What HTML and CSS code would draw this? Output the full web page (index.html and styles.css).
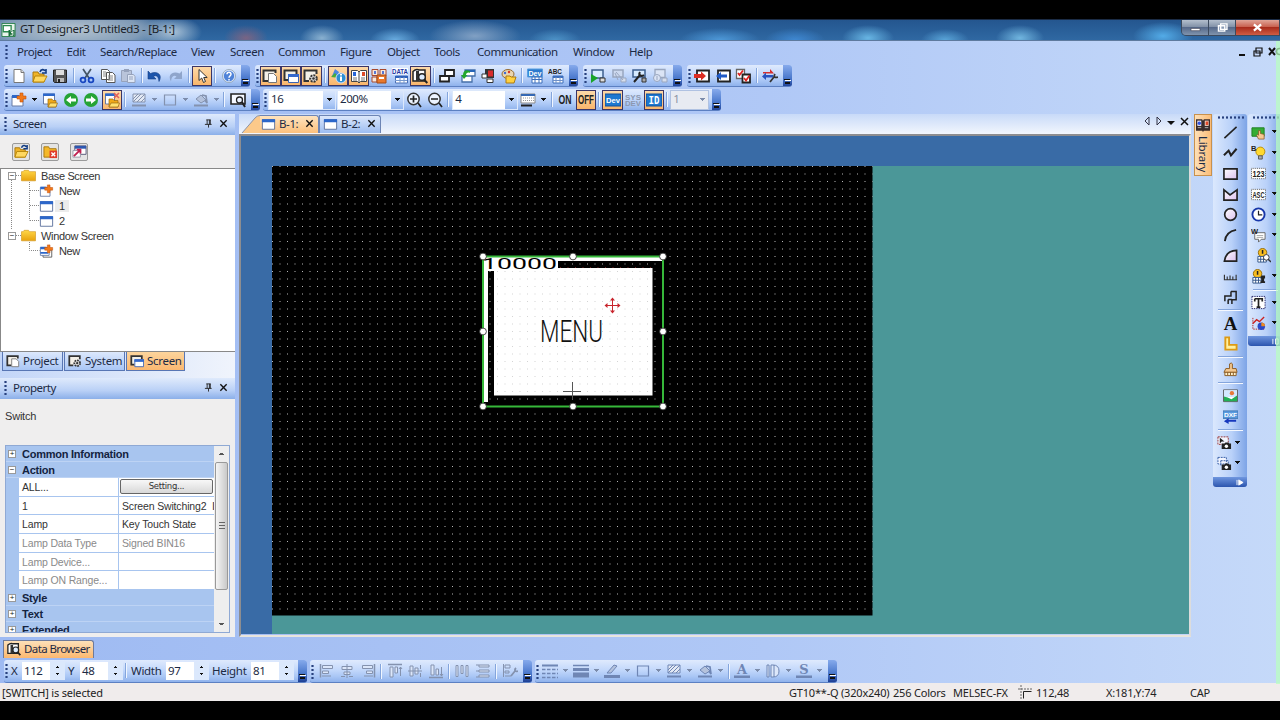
FILE: index.html
```html
<!DOCTYPE html>
<html lang="en">
<head>
<meta charset="utf-8">
<title>GT Designer3 Untitled3 - [B-1:]</title>
<link rel="stylesheet" href="styles.css">
</head>
<body>
<svg class="defs" width="0" height="0">
<defs>
<linearGradient id="gFold" x1="0" y1="0" x2="0" y2="1"><stop offset="0" stop-color="#ffd84a"/><stop offset="1" stop-color="#e8a20c"/></linearGradient>
<linearGradient id="gLil" x1="0" y1="0" x2="1" y2="1"><stop offset="0" stop-color="#fff"/><stop offset="1" stop-color="#dcc0ee"/></linearGradient>
<pattern id="dots" width="15" height="15" patternUnits="userSpaceOnUse"><path d="M0 0h1v1h-1zM7.5 0h1v1h-1zM0 7.5h1v1h-1zM7.5 7.5h1v1h-1z" fill="#b8b8b8"/></pattern>
<pattern id="dotsL" width="15" height="15" patternUnits="userSpaceOnUse"><path d="M0 0h1v1h-1zM7.5 0h1v1h-1zM0 7.5h1v1h-1zM7.5 7.5h1v1h-1z" fill="#d4d4d4"/></pattern>
</defs>
<symbol id="new" viewBox="0 0 16 16"><path d="M3 1.500h7l3 3v10H3z" fill="#fff" stroke="#777"/><path d="M10 1.500v3h3" fill="#ddd" stroke="#777"/></symbol>
<symbol id="open" viewBox="0 0 16 16"><path d="M1 4h5l1 2h5v8H1z" fill="#f0b428" stroke="#a87810"/><path d="M3 8h12l-3 6H1z" fill="#ffd860" stroke="#b8860b"/><path d="M8 4c1-3 4-3 5-1m1-2v4h-4" fill="none" stroke="#123c84" stroke-width="1.600"/></symbol>
<symbol id="save" viewBox="0 0 16 16"><path d="M1.500 2h13v12.500h-12l-1-1z" fill="#555" stroke="#222"/><path d="M4 2h8v5H4z" fill="#ddd"/><path d="M5 10h7v4H5z" fill="#bbb"/><path d="M6 11h2v3H6z" fill="#222"/></symbol>
<symbol id="cut" viewBox="0 0 16 16"><path d="M4 1l6 9M12 1L6 10" stroke="#456" stroke-width="1.700"/><circle cx="4" cy="12" r="2.400" fill="none" stroke="#1746c0" stroke-width="1.800"/><circle cx="12" cy="12" r="2.400" fill="none" stroke="#1746c0" stroke-width="1.800"/></symbol>
<symbol id="copy" viewBox="0 0 16 16"><path d="M1.500 1.500h6l2 2v8h-8zM6.500 4.500h6l2.500 2.500v7.500H6.500z" fill="#fff" stroke="#555"/><path d="M3 4h3M3 6h3M3 8h3M8 8h5M8 10h5M8 12h5" stroke="#888"/></symbol>
<symbol id="paste" viewBox="0 0 16 16"><path d="M1.500 2.500h10v11h-10z" fill="#b9c4da" stroke="#96a2bb"/><path d="M4 1h5v3H4z" fill="#96a2bb"/><path d="M7.500 6.500h6l1.500 2v6H7.500z" fill="#dde6f5" stroke="#96a2bb"/><path d="M9 9h4M9 11h4" stroke="#96a2bb"/></symbol>
<symbol id="undo" viewBox="0 0 16 16"><path d="M1 3v8h8L6.500 8.500c3-2 5 0 5.500 5 4-7-2-11-8.500-8z" fill="#1c55ac" stroke="#143f86" stroke-width=".6"/></symbol>
<symbol id="redo" viewBox="0 0 16 16"><path d="M15 3v8H7l2.500-2.500c-3-2-5 0-5.500 5-4-7 2-11 8.500-8z" fill="#8fa5cb"/></symbol>
<symbol id="arrow" viewBox="0 0 16 16"><path d="M5 1.500v11l2.700-2.500 1.800 4.500 2-1-1.800-4h3.500z" fill="#fff" stroke="#333"/></symbol>
<symbol id="help" viewBox="0 0 16 16"><circle cx="8" cy="8" r="6.500" fill="#dce9ff" stroke="#9ab"/><circle cx="8" cy="8" r="5.200" fill="#4e82d8"/><path d="M6 6.300c0-2.600 4.200-2.600 4 0C10 8 8 7.600 8 9.700M8 11v1.500" fill="none" stroke="#fff" stroke-width="1.500"/></symbol>
<symbol id="winL" viewBox="0 0 16 16"><path d="M6 13H1.500V2.500h12V5" fill="#f4f0e8" stroke="#333" stroke-width="2"/><path d="M6.500 5.500h5l3 3v6h-8z" fill="#fff" stroke="#777"/></symbol>
<symbol id="winB" viewBox="0 0 16 16"><path d="M5 12H1.500V2.500h12V6" fill="#f4f0e8" stroke="#333" stroke-width="2"/><path d="M5.500 6.500h10v8h-10z" fill="#fff" stroke="#3b64b5"/><path d="M5 6h11v3H5z" fill="#3468cc"/></symbol>
<symbol id="winG" viewBox="0 0 16 16"><path d="M6 13H1.500V2.500h12V6" fill="#f4f0e8" stroke="#333" stroke-width="2"/><circle cx="10.500" cy="10.500" r="3.300" fill="#ddd" stroke="#333" stroke-width="2" stroke-dasharray="2 1"/><circle cx="10.500" cy="10.500" r="1.300" fill="#333"/></symbol>
<symbol id="shapes" viewBox="0 0 16 16"><path d="M5 1l4 3-2 5-5-1z" fill="#4b86e0"/><path d="M1 9l4-4 4 5z" fill="#49ac35"/><circle cx="11" cy="10" r="5" fill="#2b8fd4" stroke="#cdf"/><path d="M11 6v1.500M11 8.500v4.500" stroke="#fff" stroke-width="2"/></symbol>
<symbol id="book" viewBox="0 0 16 16"><path d="M.5 2.500h6L8 4l1.500-1.500h6v11h-6L8 15l-1.500-1.500h-6z" fill="#fff" stroke="#444"/><path d="M8 4v10" stroke="#444"/><path d="M2 4h3v4H2z" fill="#2865d8"/><path d="M11 4h3v4h-3z" fill="#dd4a28"/><path d="M2 10h4M2 12h4M10 10h4M10 12h4" stroke="#777"/></symbol>
<symbol id="bookD" viewBox="0 0 16 16"><path d="M0 1.500h7L8 3l1-1.500h7v13H9L8 16l-1-1.500H0z" fill="#3a2c2c"/><path d="M1.500 3H6v6H1.500z" fill="#f3f0ff"/><path d="M10 3h4.500v6H10z" fill="#f8d8c8"/><circle cx="3.800" cy="6" r="2" fill="#3355e0"/><path d="M11 4h3v4h-3z" fill="#e04a2c"/><path d="M2 11h4M10 11h4" stroke="#bbb"/></symbol>
<symbol id="lib" viewBox="0 0 16 16"><path d="M1 1.500h6v6H1zM9 1.500h6v6H9zM1 9h5v5H1z" fill="#f8e7dc" stroke="#a7482c"/><path d="M3 3h2v3H3zM11 3h2v3h-2z" fill="#5577d4"/><path d="M6 7h9v8H6z" fill="#e9782c" stroke="#a44b16"/><path d="M8 9h5v2H8z" fill="#fff"/></symbol>
<symbol id="data" viewBox="0 0 16 16"><path d="M0 0h16v6.500H0z" fill="#fff"/><path d="M3.500 8h12v7h-12z" fill="#fff" stroke="#4d71b6"/><path d="M3 8h13v2H3z" fill="#2f62bb"/><path d="M3 12.500h12M8 9v6M12 9v6" stroke="#7799cf"/></symbol>
<symbol id="browse" viewBox="0 0 16 16"><path d="M1 3.500q3-3 6-1.500h6v11H1z" fill="#fff" stroke="#222" stroke-width="1.500"/><path d="M4 3h3v10H4z" fill="#333"/><circle cx="10" cy="9" r="3.300" fill="#dcecff" stroke="#222" stroke-width="1.400"/><path d="M12 11.500l3.300 3.500" stroke="#222" stroke-width="2"/></symbol>
<symbol id="two" viewBox="0 0 16 16"><path d="M6 2h9v6H6z" fill="#fff" stroke="#222" stroke-width="1.800"/><path d="M1 8h9v5.500H1z" fill="#fff" stroke="#222" stroke-width="1.800"/></symbol>
<symbol id="twoG" viewBox="0 0 16 16"><path d="M5 2h10v6H5zM2 8h10v6H2z" fill="#fff" stroke="#446fa9" stroke-width="1.300"/><path d="M5 2h10v2H5z" fill="#2765b7"/><path d="M10 3c-4-2-7 0-7 4H1l3 4 3.500-4H6c0-2 2-3 4-2z" fill="#22a72d"/></symbol>
<symbol id="stack" viewBox="0 0 16 16"><path d="M5 1h9v9H5z" fill="#333"/><path d="M8 2.500h5v6H8z" fill="#d82c2c"/><path d="M2 6h5v4H2zM7 11h6v3.500H7z" fill="#fff" stroke="#333"/></symbol>
<symbol id="palette" viewBox="0 0 16 16"><ellipse cx="7" cy="6" rx="6" ry="4.500" fill="#e9d5b0" stroke="#956b32"/><circle cx="4" cy="5" r="1.200" fill="#3c6bd6"/><circle cx="8" cy="4" r="1.200" fill="#d83b28"/><path d="M5 8h4l1 1h5l-2 6H5z" fill="#ffd040" stroke="#ad7c12"/></symbol>
<symbol id="devT" viewBox="0 0 16 16"><path d="M.5 1h15v8H.5z" fill="#2b79cd" stroke="#5ba0df"/><path d="M5 9h10v6H5z" fill="#fff" stroke="#3c6ebc"/><path d="M5 11.500h10M8 9v6M12 9v6" stroke="#3c6ebc"/></symbol>
<symbol id="abcT" viewBox="0 0 16 16"><path d="M5 8h10v7H5z" fill="#fff" stroke="#3c6ebc"/><path d="M5 8h10v2H5z" fill="#3c6ebc"/><path d="M5 12.500h10M8 9v6M12 9v6" stroke="#6d90c9"/></symbol>
<symbol id="simPlay" viewBox="0 0 16 16"><path d="M2 2h11v8H2z" fill="#d6eaff" stroke="#3c5f8f" stroke-width="1.500"/><path d="M1 6l7 4-7 5z" fill="#18a428"/><path d="M10 10h5v4h-5z" fill="#ddd" stroke="#333"/></symbol>
<symbol id="simStop" viewBox="0 0 16 16"><path d="M2 2h10v7H2z" fill="#cdd9ef" stroke="#99a6bf" stroke-width="1.500"/><path d="M5 4l7 8m-8-7 3 7M10 10h5v4h-5z" fill="#d6deed" stroke="#99a6bf"/></symbol>
<symbol id="simInfo" viewBox="0 0 16 16"><path d="M3 1.500h10v8H3z" fill="#dbe4f5" stroke="#99a6bf" stroke-width="1.300"/><circle cx="5" cy="10" r="3.500" fill="#dbe4f5" stroke="#99a6bf"/><path d="M5 8v4M10 10h5v4h-5z" fill="#d6deed" stroke="#99a6bf"/></symbol>
<symbol id="simTool" viewBox="0 0 16 16"><path d="M2 2h12v7H2z" fill="#d6eaff" stroke="#3c5f8f" stroke-width="1.500"/><path d="M3 14l6-7m0-3c-2 3 1 5 4 3" fill="none" stroke="#222" stroke-width="2"/><path d="M11 10h4v4h-4z" fill="#aaa" stroke="#333"/></symbol>
<symbol id="inR" viewBox="0 0 16 16"><path d="M3 2.500h12v11H3z" fill="#fff" stroke="#222" stroke-width="1.800"/><path d="M0 6h7V3.500L12 8l-5 4.500V10H0z" fill="#dd2d22"/></symbol>
<symbol id="outB" viewBox="0 0 16 16"><path d="M3 2.500h12v11H3z" fill="#fff" stroke="#222" stroke-width="1.800"/><path d="M12 6.500H6V4L1 8l5 4V9.500h6z" fill="#205bc7"/></symbol>
<symbol id="verify" viewBox="0 0 16 16"><path d="M1.500 1.500h8v9h-8z" fill="#fff" stroke="#666" stroke-width="1.300"/><path d="M7.500 6.500h7.500v8H7.500z" fill="#fff" stroke="#222" stroke-width="1.800"/><path d="M3 5l1.500 2L8 2.500M9 10l2 2.500 3.500-5" fill="none" stroke="#d22" stroke-width="1.800"/></symbol>
<symbol id="comm" viewBox="0 0 16 16"><path d="M1 4h7V1l4 4.500H1z" fill="#d62e2e"/><path d="M11 7H4V4.500L0 8.500 4 12V9.500h7z" fill="#2853bf"/><path d="M8 14l4-5m1-3c-2 3 0 4 3 3" fill="none" stroke="#333" stroke-width="1.800"/></symbol>
<symbol id="scrNew" viewBox="0 0 16 16"><path d="M1 4h11v10H1z" fill="#fff" stroke="#667aa5"/><path d="M1 3h7v3H1z" fill="#2c67ca"/><path d="M9 1h3v3h3v3h-3v3H9V7H6V4h3z" fill="#f27a1a" stroke="#c4510c" stroke-width=".6"/></symbol>
<symbol id="scrNew2" viewBox="0 0 16 16"><path d="M4 7h10v8H4z" fill="#fff" stroke="#555"/><path d="M1 4h10v9H1z" fill="#fff" stroke="#667aa5"/><path d="M1 3h7v3H1zM1 9h9v2H1z" fill="#2c67ca"/><path d="M9 1h3v3h3v3h-3v3H9V7H6V4h3z" fill="#f27a1a" stroke="#c4510c" stroke-width=".6"/></symbol>
<symbol id="scr" viewBox="0 0 16 16"><path d="M1 3h14v11H1z" fill="#fff" stroke="#556a98"/><path d="M.5 2.500h15v3.500H.5z" fill="#2c67ca"/></symbol>
<symbol id="scrOpen" viewBox="0 0 16 16"><path d="M1.500 2h11v10h-11z" fill="#fff" stroke="#667aa5"/><path d="M1 1.500h12v2.500H1z" fill="#2c67ca"/><path d="M6 7h4l1 1.500h3V15H6z" fill="#f0a818" stroke="#9a6b12" stroke-width=".7"/><path d="M8 11h7.500L14 15H6z" fill="#ffe070" stroke="#9a6b12" stroke-width=".7"/></symbol>
<symbol id="scrOpenR" viewBox="0 0 16 16"><path d="M1.500 2h9v10h-9z" fill="#fff" stroke="#667aa5"/><path d="M1 1.500h9v2.500H1z" fill="#2c67ca"/><path d="M10 1l5 5M15 1l-5 5" stroke="#e0605c" stroke-width="1.600"/><path d="M5 7h4l1 1.500h4V15H5z" fill="#f0a818" stroke="#9a6b12" stroke-width=".7"/><path d="M7 11h8.500L14 15H5z" fill="#ffe070" stroke="#9a6b12" stroke-width=".7"/></symbol>
<symbol id="gL" viewBox="0 0 16 16"><circle cx="8" cy="8" r="7" fill="#25a335"/><path d="M13 6.500H8V4L3 8l5 4V9.500h5z" fill="#fff"/></symbol>
<symbol id="gR" viewBox="0 0 16 16"><circle cx="8" cy="8" r="7" fill="#25a335"/><path d="M3 6.500h5V4l5 4-5 4V9.500H3z" fill="#fff"/></symbol>
<symbol id="hatch" viewBox="0 0 16 16"><path d="M2 2h12v8H2z" fill="#e3e9f4" stroke="currentColor"/><path d="M2 7l5-5M2 10l8-8M6 10l8-8M10 10l4-4" stroke="currentColor"/><path d="M1 12.500h14v2H1z" fill="currentColor"/></symbol>
<symbol id="rectG" viewBox="0 0 16 16"><path d="M2.500 3h11v10h-11z" fill="none" stroke="currentColor" stroke-width="1.200"/></symbol>
<symbol id="bucket" viewBox="0 0 16 16"><path d="M3 7l5-4 5 5-5 3z" fill="#b4c2dc" stroke="currentColor"/><path d="M9 3l4 1 1 7-2-3" fill="none" stroke="currentColor" stroke-width="1.700"/><path d="M1 12.500h14v2H1z" fill="currentColor"/></symbol>
<symbol id="look" viewBox="0 0 16 16"><path d="M1 2h14v10H1z" fill="#f5f8ff" stroke="#222" stroke-width="1.600"/><circle cx="9.500" cy="8" r="3" fill="#eaf2ff" stroke="#222" stroke-width="1.300"/><path d="M12 10l3 5" stroke="#222" stroke-width="2"/></symbol>
<symbol id="zin" viewBox="0 0 16 16"><circle cx="7.500" cy="7" r="5.700" fill="#edf4ff" stroke="#333" stroke-width="1.500"/><path d="M4 7h7M7.500 3.500v7M12 11l3 4" stroke="#222" stroke-width="1.700"/></symbol>
<symbol id="zout" viewBox="0 0 16 16"><circle cx="7.500" cy="7" r="5.700" fill="#edf4ff" stroke="#333" stroke-width="1.500"/><path d="M4 7h7M12 11l3 4" stroke="#222" stroke-width="1.700"/></symbol>
<symbol id="gridI" viewBox="0 0 16 16"><path d="M1 2h14v9H1z" fill="#fff" stroke="#888"/><path d="M1 2h14v2H1z" fill="#3468b4"/><path d="M3 6h11M3 8.500h11" stroke="#999" stroke-dasharray="1 1"/><path d="M1 12.500h11v2H1z" fill="#222"/></symbol>
<symbol id="blueBox" viewBox="0 0 16 16"><path d="M0 2h16v12H0z" fill="#1e78d0" stroke="#0f4f9a"/></symbol>
<symbol id="aL" viewBox="0 0 16 16"><path d="M1.500 1v13.500" stroke="currentColor" stroke-width="1.500"/><path d="M3.500 2.500h10v3h-10zM3.500 8h6v2.500h-6z" fill="#dce7fa" stroke="currentColor"/><path d="M3 13h9" stroke="currentColor"/></symbol>
<symbol id="aC" viewBox="0 0 16 16"><path d="M3 3.500h10v3H3zM5 9h6v2.500H5z" fill="#dce7fa" stroke="currentColor"/><path d="M8 1v14M2 13.500h4M10 13.500h4" stroke="currentColor"/></symbol>
<symbol id="aR" viewBox="0 0 16 16"><path d="M14.500 1v13.500" stroke="currentColor" stroke-width="1.500"/><path d="M2.500 2.500h10v3h-10zM6.500 8h6v2.500h-6z" fill="#dce7fa" stroke="currentColor"/><path d="M4 13h9" stroke="currentColor"/></symbol>
<symbol id="aT" viewBox="0 0 16 16"><path d="M1 1.500h14" stroke="currentColor" stroke-width="1.500"/><path d="M3 4h3v10H3zM8 4h2.500v6H8z" fill="#dce7fa" stroke="currentColor"/><path d="M13.500 4v9M12 6l1.500-2L15 6" stroke="currentColor" fill="none"/></symbol>
<symbol id="aM" viewBox="0 0 16 16"><path d="M3 3h3v10H3zM8 5h3v6H8z" fill="#dce7fa" stroke="currentColor"/><path d="M1 8h14M13.500 2v4M13.500 10v4" stroke="currentColor"/></symbol>
<symbol id="aB" viewBox="0 0 16 16"><path d="M1 14.500h14" stroke="currentColor" stroke-width="1.500"/><path d="M3 2h3v10H3zM8 6h2.500v6H8z" fill="#dce7fa" stroke="currentColor"/><path d="M13.500 4v9M12 11l1.500 2 1.500-2" stroke="currentColor" fill="none"/></symbol>
<symbol id="dH" viewBox="0 0 16 16"><path d="M2 2.500h2v11H2zM7 2.500h2v8H7zM12 2.500h2v11h-2z" fill="#dce7fa" stroke="currentColor"/></symbol>
<symbol id="dV" viewBox="0 0 16 16"><path d="M4 2h10v2H4zM4 7h10v2H4zM4 12h10v2H4z" fill="#dce7fa" stroke="currentColor"/><path d="M1 2h3M1 8h3M1 14h3" stroke="currentColor"/></symbol>
<symbol id="dT" viewBox="0 0 16 16"><path d="M1.500 1v13M3 2h5v3H3zM3 8h4v2H3zM3 13h6" fill="none" stroke="currentColor"/><path d="M9 13l4-5m1-3c-2 2-1 4 2 3" stroke="currentColor" stroke-width="1.800" fill="none"/></symbol>
<symbol id="lDash" viewBox="0 0 16 16"><path d="M0 2.500h16" stroke="currentColor" stroke-width="2"/><path d="M0 6.500h16M0 10.500h16M0 14.500h16" stroke="currentColor" stroke-width="1.500" stroke-dasharray="3.500 1.500"/></symbol>
<symbol id="lW" viewBox="0 0 16 16"><path d="M0 2.500h16" stroke="currentColor" stroke-width="1.500"/><path d="M0 6.500h16" stroke="currentColor" stroke-width="3"/><path d="M0 12h16" stroke="currentColor" stroke-width="5"/></symbol>
<symbol id="pen" viewBox="0 0 16 16"><path d="M3 10l7-8 3 1-6 7z" fill="#b4c2dc" stroke="currentColor"/><path d="M0 12h16v3H0z" fill="currentColor"/></symbol>
<symbol id="uline" viewBox="0 0 16 16"><path d="M0 12.500h16v2.500H0z" fill="currentColor"/></symbol>
<symbol id="folder" viewBox="0 0 16 16"><path d="M0 3h2l1-1.500h5L9 3h7v10.500H0z" fill="url(#gFold)" stroke="#cf9418" stroke-width=".7"/></symbol>
<symbol id="pin" viewBox="0 0 10 10"><path d="M2.500 1h5M3.500 1v5M6 1v5M7 1v5M1 6h7.500M5 6v3.500" stroke="#222" fill="none"/></symbol>
<symbol id="x" viewBox="0 0 10 10"><path d="M1.500 1.500l7 7M8.500 1.500l-7 7" stroke="#111" stroke-width="1.500"/></symbol>
<symbol id="line" viewBox="0 0 16 16"><path d="M1.500 14L14.500 2" stroke="#222" stroke-width="1.700"/></symbol>
<symbol id="poly" viewBox="0 0 16 16"><path d="M1 11l5-5 2.500 5 6-7" fill="none" stroke="#222" stroke-width="2.200"/></symbol>
<symbol id="rect" viewBox="0 0 16 16"><path d="M1 3h14v11H1z" fill="url(#gLil)" stroke="#222" stroke-width="1.800"/></symbol>
<symbol id="pgon" viewBox="0 0 16 16"><path d="M1 3l6.500 5.500L15 3v11H1z" fill="url(#gLil)" stroke="#222" stroke-width="1.800"/></symbol>
<symbol id="circ" viewBox="0 0 16 16"><circle cx="8" cy="8" r="6.200" fill="url(#gLil)" stroke="#222" stroke-width="1.800"/></symbol>
<symbol id="arc" viewBox="0 0 16 16"><path d="M2 14Q3 4 14 2" fill="none" stroke="#222" stroke-width="1.900"/></symbol>
<symbol id="sect" viewBox="0 0 16 16"><path d="M1.500 14Q3 3 14.500 2.500V14z" fill="url(#gLil)" stroke="#222" stroke-width="1.800"/></symbol>
<symbol id="scale" viewBox="0 0 16 16"><path d="M1 11.500h14M1.500 6v6M4.500 8v4M7.500 7v5M10.500 8v4M14 6v6" stroke="#333" stroke-width="1.200"/></symbol>
<symbol id="pipe" viewBox="0 0 16 16"><path d="M2 12V6.500h6.500v-5M5.500 15v-5M2 6.500M5.500 10v5M8.500 1.500h5.500v9H9.500V15M5.500 10h4" fill="none" stroke="#222" stroke-width="1.600"/></symbol>
<symbol id="ell" viewBox="0 0 16 16"><path d="M2.500 1.500h4v8h8v5h-12z" fill="#fff0a0" stroke="#dd9a14" stroke-width="2"/></symbol>
<symbol id="brush" viewBox="0 0 16 16"><path d="M7 2q2-2 3 0v5h4l1 4H1l2-4h4z" fill="#f4c890" stroke="#8a5a20"/><path d="M2 11h12v3.500H2z" fill="#fff1cc" stroke="#8a5a20"/><path d="M5 11v3M8 11v3M11 11v3" stroke="#8a5a20"/></symbol>
<symbol id="pic" viewBox="0 0 16 16"><path d="M.5 2h15v12.500H.5z" fill="#fff" stroke="#555"/><path d="M1 2.500h14v7H1z" fill="#d2e8ff"/><circle cx="9.500" cy="5.500" r="2.300" fill="#e77838"/><path d="M1 9l4 1 4 2 6-4v6H1z" fill="#22b057"/></symbol>
<symbol id="dxf" viewBox="0 0 16 16"><path d="M0 2h16v8H0z" fill="#5a9be0" stroke="#4077b2"/><path d="M14 11.500H6V9.500L1 13l5 3v-2.500h8z" fill="#1738bd"/></symbol>
<symbol id="cam" viewBox="0 0 16 16"><path d="M1 2h11v8H1z" fill="#f2f5ff" stroke="#933" stroke-dasharray="2 1"/><path d="M3 3v6l2-2h3z" fill="#222"/><path d="M5 9h3l1-1h3l1 1h2v6H5z" fill="#222"/><circle cx="10" cy="12" r="1.800" fill="#fff"/></symbol>
<symbol id="cam2" viewBox="0 0 16 16"><path d="M1 1.500h9v7H1zM4 5h8v5H4z" fill="#f2f5ff" stroke="#335ca4" stroke-dasharray="2 1"/><path d="M5 9h3l1-1h3l1 1h2v6H5z" fill="#222"/><circle cx="10" cy="12" r="1.800" fill="#fff"/></symbol>
<symbol id="sw" viewBox="0 0 16 16"><path d="M1 3h13v9H1z" fill="#35ad35" stroke="#1f7e22"/><path d="M8 15l-2-4 1-1 1 1V6h2v3l4 1v5z" fill="#f8c890" stroke="#8a5a28" stroke-width=".8"/></symbol>
<symbol id="bulb" viewBox="0 0 16 16"><circle cx="10" cy="7" r="4.800" fill="#ffd930" stroke="#b88c0b"/><path d="M8 11.500h4V15H8z" fill="#aaa" stroke="#555"/></symbol>
<symbol id="dashBox" viewBox="0 0 16 16"><path d="M.5 2.500h15v11H.5z" fill="#fff" stroke="#555" stroke-dasharray="1 1"/></symbol>
<symbol id="clock" viewBox="0 0 16 16"><circle cx="8" cy="8" r="6.500" fill="#fff" stroke="#1837a9" stroke-width="2"/><path d="M8 4v4.500h4" fill="none" stroke="#222" stroke-width="1.300"/></symbol>
<symbol id="wmsg" viewBox="0 0 16 16"><path d="M4 5h11v7h-4l-3 3v-3H4z" fill="#fff" stroke="#666"/><path d="M6 8h7M6 10h7" stroke="#aaa"/></symbol>
<symbol id="alarmZ" viewBox="0 0 16 16"><circle cx="7" cy="5" r="4.500" fill="#f8bd20" stroke="#946c08"/><path d="M7 2v4" stroke="#222" stroke-width="1.600"/><path d="M2 9h9v6H2z" fill="#fff" stroke="#358"/><path d="M2 12h9M5 9v6M8 9v6" stroke="#358"/><circle cx="11" cy="10" r="3" fill="#fff" stroke="#333"/><path d="M13 12l3 3" stroke="#333" stroke-width="1.500"/></symbol>
<symbol id="alarmI" viewBox="0 0 16 16"><circle cx="7" cy="5" r="4.500" fill="#f8bd20" stroke="#946c08"/><path d="M7 2v4" stroke="#222" stroke-width="1.600"/><path d="M2 9h9v6H2z" fill="#fff" stroke="#358"/><path d="M2 12h9M5 9v6M8 9v6" stroke="#358"/><path d="M11 7h4v3h-1v3h1v2h-5v-2h1v-3h-1z" fill="#222"/></symbol>
<symbol id="tpart" viewBox="0 0 16 16"><path d="M1 1.500h14v13H1z" fill="#fff" stroke="#226" stroke-dasharray="1.500 1"/><path d="M4 4h8v3M4 7V4M8 4v9M6 13h4" fill="none" stroke="#222" stroke-width="1.800"/></symbol>
<symbol id="graph" viewBox="0 0 16 16"><path d="M2 2v12h12" fill="none" stroke="#a22" stroke-dasharray="1.500 1"/><path d="M2 8l4-4 3 2 5-5" fill="none" stroke="#c22" stroke-width="1.500"/><circle cx="11" cy="11" r="4" fill="#2947c7"/><path d="M11 11V7a4 4 0 0 1 4 4z" fill="#ee8a20"/></symbol>
</svg>

<div class="app">
<header class="title">
  <svg class="logo" viewBox="0 0 16 16"><path d="M.5.500h15v15H.5z" fill="#e8f4ea" stroke="#1d7a40"/><path d="M2 3h9v7H2z" fill="#fff" stroke="#2d8a50" stroke-width="1.500"/><path d="M8 8h7v7H8z" fill="#176d39"/><path d="M10 9h3v2h-2 2v3h-3" fill="none" stroke="#fff"/></svg>
  <span class="caption">GT Designer3 Untitled3 - [B-1:]</span>
  <div class="wbtns"><i class="wb"><svg viewBox="0 0 12 10"><path d="M1 6h10v2.500H1z" fill="#fff" stroke="#445" stroke-width=".7"/></svg></i><i class="wb"><svg viewBox="0 0 12 10"><path d="M4 1h7v6H4zM1.500 3h7v6h-7z" fill="#899bb5" stroke="#fff" stroke-width="1.500"/></svg></i><i class="wb close"><svg viewBox="0 0 12 10"><path d="M2 1.500l8 7M10 1.500l-8 7" stroke="#fff" stroke-width="2.500"/></svg></i></div>
</header>
<div class="chrome">
<nav class="menu"><i class="grip"></i>
  <span class="m1">Project</span><span class="m2">Edit</span><span class="m3">Search/Replace</span><span class="m4">View</span><span class="m5">Screen</span><span class="m6">Common</span><span class="m7">Figure</span><span class="m8">Object</span><span class="m9">Tools</span><span class="m10">Communication</span><span class="m11">Window</span><span class="m12">Help</span>
  <svg class="mdi" width="44" height="12" viewBox="0 0 44 12"><path d="M1 9h6" stroke="#111" stroke-width="2"/><path d="M18 2h6v5h-6zM16 5h6v5h-6z" fill="#c6d8f8" stroke="#111" stroke-width="1.200"/><path d="M31 2l6 7M37 2l-6 7" stroke="#111" stroke-width="2"/><circle cx="41.500" cy="5.500" r="3" fill="none" stroke="#111" stroke-width="1.500"/></svg>
</nav>
<div class="row">
  <div class="tb w245"><i class="grip"></i><b class="i"><svg><use href="#new"/></svg></b><b class="i"><svg><use href="#open"/></svg></b><b class="i"><svg><use href="#save"/></svg></b><i class="s"></i><b class="i"><svg><use href="#cut"/></svg></b><b class="i"><svg><use href="#copy"/></svg></b><b class="i"><svg><use href="#paste"/></svg></b><i class="s"></i><b class="i"><svg><use href="#undo"/></svg></b><b class="i"><svg><use href="#redo"/></svg></b><i class="s"></i><b class="i on"><svg><use href="#arrow"/></svg></b><i class="s"></i><b class="i"><svg><use href="#help"/></svg></b><i class="chev"></i></div>
  <div class="tb w323"><i class="grip"></i><b class="i on"><svg><use href="#winL"/></svg></b><b class="i on"><svg><use href="#winB"/></svg></b><b class="i on"><svg><use href="#winG"/></svg></b><i class="s"></i><b class="i on"><svg><use href="#shapes"/></svg></b><b class="i on"><svg><use href="#book"/></svg></b><b class="i"><svg><use href="#lib"/></svg></b><b class="i"><svg viewBox="0 0 16 16"><use href="#data"/><text x="0" y="5.500" class="micro navy" textLength="16" lengthAdjust="spacingAndGlyphs">DATA</text></svg></b><b class="i on"><svg><use href="#browse"/></svg></b><i class="s"></i><b class="i"><svg><use href="#two"/></svg></b><b class="i"><svg><use href="#twoG"/></svg></b><b class="i"><svg><use href="#stack"/></svg></b><b class="i"><svg><use href="#palette"/></svg></b><i class="s"></i><b class="i"><svg viewBox="0 0 16 16"><use href="#devT"/><text x="1.500" y="7.500" class="micro white" textLength="13" lengthAdjust="spacingAndGlyphs">Dev</text></svg></b><b class="i"><svg viewBox="0 0 16 16"><use href="#abcT"/><text x="0" y="6" class="micro" textLength="14" lengthAdjust="spacingAndGlyphs">ABC</text></svg></b><i class="chev"></i></div>
  <div class="tb w99"><i class="grip"></i><b class="i"><svg><use href="#simPlay"/></svg></b><b class="i"><svg><use href="#simStop"/></svg></b><b class="i"><svg><use href="#simTool"/></svg></b><b class="i"><svg><use href="#simInfo"/></svg></b><i class="chev"></i></div>
  <div class="tb w105"><i class="grip"></i><b class="i"><svg><use href="#inR"/></svg></b><b class="i"><svg><use href="#outB"/></svg></b><b class="i"><svg><use href="#verify"/></svg></b><i class="s"></i><b class="i"><svg><use href="#comm"/></svg></b><i class="chev"></i></div>
</div>
<div class="row r2">
  <div class="tb w256"><i class="grip"></i><b class="i"><svg><use href="#scrNew"/></svg></b><i class="d dk"></i><b class="i"><svg><use href="#scrOpen"/></svg></b><b class="i"><svg><use href="#gL"/></svg></b><b class="i"><svg><use href="#gR"/></svg></b><b class="i on"><svg><use href="#scrOpenR"/></svg></b><i class="s"></i><b class="i dim"><svg><use href="#hatch"/></svg></b><i class="d"></i><b class="i dim"><svg><use href="#rectG"/></svg></b><i class="d"></i><b class="i dim"><svg><use href="#bucket"/></svg></b><i class="d"></i><i class="s"></i><b class="i"><svg><use href="#look"/></svg></b><i class="chev"></i></div>
  <div class="tb w458"><i class="grip"></i><span class="combo c1">16<i class="d dk"></i></span><span class="combo c2">200%<i class="d dk"></i></span><b class="i"><svg><use href="#zin"/></svg></b><b class="i"><svg><use href="#zout"/></svg></b><i class="s"></i><span class="combo c3">4<i class="d dk"></i></span><b class="i"><svg><use href="#gridI"/></svg></b><i class="d dk"></i><i class="s"></i><b class="i"><svg class="vis" viewBox="0 0 16 16"><text x="1.500" y="12" class="onoff" textLength="13" lengthAdjust="spacingAndGlyphs">ON</text></svg></b><b class="i on"><svg class="vis" viewBox="0 0 16 16"><text x="0" y="12" class="onoff" textLength="16" lengthAdjust="spacingAndGlyphs">OFF</text></svg></b><i class="s"></i><b class="i on"><svg viewBox="0 0 16 16"><use href="#blueBox"/><text x="1" y="11" class="mini white" textLength="14" lengthAdjust="spacingAndGlyphs">Dev</text></svg></b><b class="i"><svg viewBox="0 0 16 16"><text x="0" y="7.500" class="micro gray" textLength="16" lengthAdjust="spacingAndGlyphs">SYS</text><text x="0" y="14" class="micro gray" textLength="16" lengthAdjust="spacingAndGlyphs">DEV</text></svg></b><b class="i on"><svg viewBox="0 0 16 16"><use href="#blueBox"/><text x="2.500" y="11.500" class="idt" textLength="11" lengthAdjust="spacingAndGlyphs">ID</text></svg></b><i class="s"></i><span class="combo c4">1<i class="d"></i></span><i class="chev"></i></div>
</div>

<main class="main">
<aside class="left">
  <div class="phead"><i class="grip"></i><span>Screen</span><svg class="pi"><use href="#pin"/></svg><svg class="pi"><use href="#x"/></svg></div>
  <div class="ptools"><b><svg><use href="#open"/></svg></b><b><svg viewBox="0 0 16 16"><path d="M1 3h5l1 2h7v9H1z" fill="#f4b82a" stroke="#a87810"/><path d="M7 7h8v8H7z" fill="#e03a2c"/><path d="M9 9l4 4M13 9l-4 4" stroke="#fff" stroke-width="1.500"/></svg></b><b><svg viewBox="0 0 16 16"><path d="M3 2h12v9H3z" fill="#fff" stroke="#557"/><path d="M3 2h12v3H3z" fill="#2c57b0"/><path d="M1 7h8v7H1z" fill="#fff" stroke="#99a"/><path d="M2 13l6-6M5 6h4v4" fill="none" stroke="#c02050" stroke-width="2"/></svg></b></div>
  <div class="tree">
    <svg class="wires" width="60" height="90" viewBox="0 0 60 90"><path d="M11.500 12v50M16 7.500h6M16 67.500h6M29.500 14v38.500M30 22.500h10M30 37.500h10M30 52.500h10M29.500 74v8.500h10" fill="none" stroke="#888" stroke-dasharray="1 1"/></svg>
    <div class="n first"><i class="pm">−</i><svg><use href="#folder"/></svg><span>Base Screen</span></div>
    <div class="n c"><svg><use href="#scrNew"/></svg><span>New</span></div>
    <div class="n c"><svg><use href="#scr"/></svg><span class="sel">1</span></div>
    <div class="n c"><svg><use href="#scr"/></svg><span>2</span></div>
    <div class="n"><i class="pm">−</i><svg><use href="#folder"/></svg><span>Window Screen</span></div>
    <div class="n c"><svg><use href="#scrNew2"/></svg><span>New</span></div>
  </div>
  <div class="tabs"><span class="t1"><svg><use href="#winL"/></svg>Project</span><span class="t2"><svg><use href="#winG"/></svg>System</span><span class="t3 act"><svg><use href="#winB"/></svg>Screen</span></div>
  <div class="phead p2"><i class="grip"></i><span>Property</span><svg class="pi"><use href="#pin"/></svg><svg class="pi"><use href="#x"/></svg></div>
  <div class="props">
    <div class="swl">Switch</div>
    <div class="pbox">
      <div class="plist">
        <div class="cat"><i class="pm">+</i>Common Information</div>
        <div class="cat"><i class="pm">−</i>Action</div>
        <div class="pr"><span>ALL...</span><span class="v0"><i class="btn">Setting...</i></span></div>
        <div class="pr"><span>1</span><span>Screen Switching2 &nbsp;I</span></div>
        <div class="pr"><span>Lamp</span><span>Key Touch State</span></div>
        <div class="pr g"><span>Lamp Data Type</span><span>Signed BIN16</span></div>
        <div class="pr g"><span>Lamp Device...</span><span></span></div>
        <div class="pr g"><span>Lamp ON Range...</span><span></span></div>
        <div class="cat"><i class="pm">+</i>Style</div>
        <div class="cat"><i class="pm">+</i>Text</div>
        <div class="cat"><i class="pm">+</i>Extended</div>
      </div>
      <div class="sb"><i class="up"></i><i class="thumb"></i><i class="sp"></i><i class="dn"></i></div>
    </div>
  </div>
</aside>
<section class="editor">
  <div class="etabs"><svg class="slant" width="19" height="18" viewBox="0 0 19 18"><path d="M1 18L14 3q2-2.500 5-2.500V18z" fill="#fcc98a"/><path d="M1 18L14 3q2-2.500 5-2.500" fill="none" stroke="#8a93a8"/></svg><span class="et a"><svg><use href="#scr"/></svg><span>B-1:</span><svg class="pi"><use href="#x"/></svg></span><span class="et"><svg><use href="#scr"/></svg><span>B-2:</span><svg class="pi"><use href="#x"/></svg></span>
  <svg class="nav" width="48" height="12" viewBox="0 0 48 12"><path d="M6 2L2 6l4 4zM14 2l4 4-4 4z" fill="none" stroke="#334"/><path d="M24 6h8l-4 4z" fill="#111"/><path d="M38 3l7 7M45 3l-7 7" stroke="#111" stroke-width="1.500"/></svg></div>
  <div class="desk">
    <svg width="948" height="498" viewBox="241 136 948 498">
      <rect x="241" y="136" width="948" height="498" fill="#396ba6"/>
      <rect x="272" y="166" width="917" height="468" fill="#4b9798"/>
      <rect x="272" y="166" width="600.500" height="449.500" fill="#000"/>
      <g transform="translate(272 166)"><rect width="600.500" height="449" fill="url(#dots)"/></g>
      <path d="M483 257h180v4H558v10H488v131h-5z" fill="#fff"/>
      <rect x="494" y="268" width="158.500" height="127.500" fill="#fff"/>
      <g transform="translate(272 166)"><rect x="223" y="103" width="157" height="126" fill="url(#dotsL)"/></g>
      <path d="M560 267.500h92" stroke="#702020" stroke-dasharray="1 6.500"/>
      <rect x="483" y="256.500" width="180" height="150" fill="none" stroke="#36b83a" stroke-width="2"/>
      <path d="M485 258h73v12.500h-73z" fill="#fff"/>
      <text x="482" y="268.800" class="num" textLength="75" lengthAdjust="spacingAndGlyphs">10000</text>
      <text x="540" y="342" class="mtxt" textLength="63" lengthAdjust="spacingAndGlyphs">MENU</text>
      <path d="M563 391.500h18M572.500 382v17" stroke="#555"/>
      <path d="M605 305.500h15M612.500 298v15" stroke="#c8242c"/>
      <path d="M604.500 305.500l3-2.500v5zM620.500 305.500l-3-2.500v5zM612.500 297.500l-2.500 3h5zM612.500 313.500l-2.500-3h5z" fill="#c8242c"/>
      <g fill="#fff" stroke="#222" stroke-width=".8"><circle cx="483" cy="256.500" r="3.400"/><circle cx="573" cy="256.500" r="3.400"/><circle cx="663" cy="256.500" r="3.400"/><circle cx="483" cy="331.500" r="3.400"/><circle cx="663" cy="331.500" r="3.400"/><circle cx="483" cy="406.500" r="3.400"/><circle cx="573" cy="406.500" r="3.400"/><circle cx="663" cy="406.500" r="3.400"/></g>
    </svg>
  </div>
</section>
<aside class="right">
  <div class="libtab"><svg><use href="#bookD"/></svg><span>Library</span></div>
  <div class="vtb va"><i class="hgrip"></i><b><svg><use href="#line"/></svg></b><b><svg><use href="#poly"/></svg></b><b><svg><use href="#rect"/></svg></b><b><svg><use href="#pgon"/></svg></b><b><svg><use href="#circ"/></svg></b><b><svg><use href="#arc"/></svg></b><b><svg><use href="#sect"/></svg></b><b><svg><use href="#scale"/></svg></b><b><svg><use href="#pipe"/></svg></b><i class="hs"></i><b><svg class="vis" viewBox="0 0 16 16"><text x="8" y="15" text-anchor="middle" class="aglyph">A</text></svg></b><b><svg><use href="#ell"/></svg></b><i class="hs"></i><b><svg><use href="#brush"/></svg></b><i class="hs"></i><b><svg><use href="#pic"/></svg></b><b><svg viewBox="0 0 16 16"><use href="#dxf"/><text x="1" y="8.500" class="micro white" textLength="14" lengthAdjust="spacingAndGlyphs">DXF</text></svg></b><i class="hs"></i><b class="w"><svg><use href="#cam"/></svg><i class="d dk"></i></b><b class="w"><svg><use href="#cam2"/></svg><i class="d dk"></i></b><i class="vend"><svg viewBox="0 0 10 8"><path d="M1 1v6M3 1l5 3-5 3z" fill="#fff" stroke="#fff"/></svg></i></div>
  <div class="vtb vb"><i class="hgrip"></i><b><svg><use href="#sw"/></svg><i class="d dk"></i></b><b><svg viewBox="0 0 16 16"><use href="#bulb"/><text x="0" y="6" class="mini">B</text></svg><i class="d dk"></i></b><b><svg viewBox="0 0 16 16"><use href="#dashBox"/><text x="1.500" y="11.500" class="nums" textLength="13" lengthAdjust="spacingAndGlyphs">123</text></svg><i class="d dk"></i></b><b><svg viewBox="0 0 16 16"><use href="#dashBox"/><text x="1.500" y="11.500" class="nums" textLength="13" lengthAdjust="spacingAndGlyphs">ASC</text></svg><i class="d dk"></i></b><b><svg><use href="#clock"/></svg><i class="d dk"></i></b><b><svg viewBox="0 0 16 16"><use href="#wmsg"/><text x="0" y="6" class="mini">W</text></svg><i class="d dk"></i></b><b class="in"><svg><use href="#alarmZ"/></svg></b><b><svg><use href="#alarmI"/></svg><i class="d dk"></i></b><i class="hs"></i><b><svg><use href="#tpart"/></svg><i class="d dk"></i></b><b><svg><use href="#graph"/></svg><i class="d dk"></i></b><i class="vend"><svg viewBox="0 0 10 8"><path d="M2 1v6M5 1v6h3V1z" fill="none" stroke="#fff"/></svg></i></div>
</aside>
</main>

<footer class="foot">
  <div class="dbrow"><span class="dbt"><svg><use href="#browse"/></svg>Data Browser</span></div>
  <div class="row r3">
    <div class="tb w303 pos"><i class="grip"></i><span class="lb lx">X</span><span class="sp">112<i></i></span><span class="lb ly">Y</span><span class="sp">48<i></i></span><i class="s"></i><span class="lb lw">Width</span><span class="sp">97<i></i></span><span class="lb lh">Height</span><span class="sp">81<i></i></span><i class="chev"></i></div>
    <div class="tb w221 dim"><i class="grip g2"></i><b class="i"><svg><use href="#aL"/></svg></b><b class="i"><svg><use href="#aC"/></svg></b><b class="i"><svg><use href="#aR"/></svg></b><i class="s"></i><b class="i"><svg><use href="#aT"/></svg></b><b class="i"><svg><use href="#aM"/></svg></b><b class="i"><svg><use href="#aB"/></svg></b><i class="s"></i><b class="i"><svg><use href="#dH"/></svg></b><b class="i"><svg><use href="#dV"/></svg></b><i class="s"></i><b class="i"><svg><use href="#dT"/></svg></b><i class="chev"></i></div>
    <div class="tb w302 dim blue"><i class="grip"></i><b class="i"><svg><use href="#lDash"/></svg></b><i class="d"></i><b class="i"><svg><use href="#lW"/></svg></b><i class="d"></i><b class="i"><svg><use href="#pen"/></svg></b><i class="d"></i><b class="i"><svg><use href="#rectG"/></svg></b><i class="d"></i><b class="i"><svg><use href="#hatch"/></svg></b><i class="d"></i><b class="i"><svg><use href="#bucket"/></svg></b><i class="d"></i><i class="s"></i><b class="i"><svg viewBox="0 0 16 16"><use href="#uline"/><text x="8" y="11" text-anchor="middle" class="fmt">A</text></svg></b><i class="d"></i><b class="i"><svg viewBox="0 0 16 16"><path d="M2 2v12h2V2zM6 2h2q6 0 6 6t-6 6H6zM9 2v12" fill="#dce7fa" stroke="currentColor"/></svg></b><i class="d"></i><b class="i"><svg viewBox="0 0 16 16"><use href="#uline"/><text x="8" y="11" text-anchor="middle" class="fmt">S</text></svg></b><i class="d"></i><i class="chev"></i></div>
  </div>
</footer>
<div class="status"><span class="st0">[SWITCH] is selected</span><span class="st1">GT10**-Q (320x240)</span><span class="st2">256 Colors</span><span class="st3">MELSEC-FX</span><svg class="sti" width="14" height="14" viewBox="0 0 14 14"><path d="M3 0v14M0 4h14" stroke="#666" stroke-dasharray="2 1"/><path d="M5.500 6.500h8M5.500 6.500v7" stroke="#222"/></svg><span class="st4">112,48</span><span class="st5">X:181,Y:74</span><span class="st6">CAP</span></div>
<div class="edge"></div>
</div>
</div>
</body>
</html>
```
FILE: styles.css
```css
* { box-sizing: border-box; }
body { margin: 0; background: #000; overflow: hidden; font-family: "Noto Sans", "Open Sans", sans-serif; font-size: 12px; color: #1c2a44; }
i, b { font-style: normal; font-weight: normal; }
.defs { display: block; height: 0; }
svg { display: block; flex: none; }
.vis { overflow: visible; }
.app { width: 1280px; height: 720px; padding: 19px 0; background: #000; overflow: hidden; }
.micro { font: bold 6.500px "Liberation Sans", sans-serif; fill: #222; }
.mini { font: bold 8px "Liberation Sans", sans-serif; fill: #222; }
.nums { font: bold 9.500px "Liberation Sans", sans-serif; fill: #222; }
.onoff { font: bold 12px "Liberation Sans", sans-serif; fill: #222; }
.idt { font: bold 10px "DejaVu Sans Mono", monospace; fill: #fff; }
.fmt { font: bold 13px "DejaVu Serif", serif; fill: currentColor; }
.white { fill: #fff; }
.navy { fill: #2034a0; }
.gray { fill: #8c98b0; }
.aglyph { font: bold 20px "Liberation Serif", serif; fill: #111; }

.title { height: 22px; display: flex; align-items: center; padding-left: 1px; border-top: 1px solid #1b2c46; border-bottom: 1px solid #5e7a9e;
  background:
    radial-gradient(ellipse 110px 26px at 70px 10px, rgba(190,202,212,.95), rgba(150,170,190,.8) 65%, transparent),
    radial-gradient(ellipse 30px 16px at 172px 12px, rgba(190,210,225,.9), transparent),
    radial-gradient(ellipse 22px 13px at 246px 18px, rgba(140,100,125,.8), transparent),
    radial-gradient(ellipse 22px 13px at 322px 18px, rgba(160,195,220,.8), transparent),
    radial-gradient(ellipse 25px 12px at 395px 20px, rgba(120,190,240,.8), transparent),
    radial-gradient(ellipse 46px 16px at 475px 16px, rgba(150,175,205,.8), transparent),
    radial-gradient(ellipse 26px 11px at 555px 20px, rgba(90,165,215,.7), transparent),
    radial-gradient(ellipse 40px 12px at 720px 20px, rgba(85,165,230,.8), transparent),
    radial-gradient(ellipse 30px 12px at 795px 20px, rgba(70,150,230,.7), transparent),
    radial-gradient(ellipse 26px 13px at 868px 18px, rgba(110,190,235,.9), transparent),
    radial-gradient(ellipse 24px 11px at 945px 20px, rgba(100,180,230,.8), transparent),
    radial-gradient(ellipse 24px 13px at 1020px 18px, rgba(120,190,230,.9), transparent),
    radial-gradient(ellipse 30px 14px at 1163px 16px, rgba(85,175,235,.95), transparent),
    linear-gradient(#24568f, #2f68a2); }
.logo { width: 15px; height: 14px; }
.caption { margin-left: 4px; padding-bottom: 3px; font-size: 11.500px; letter-spacing: -.3px; color: #1a1f28; white-space: nowrap; }
.wbtns { margin-left: auto; display: flex; height: 16px; align-self: flex-start; border: 1px solid #3c4a5e; border-top: 0; border-radius: 0 0 0 5px; overflow: hidden; }
.wb { width: 27px; display: grid; place-items: center; background: linear-gradient(#b4bfcd, #7d8da4 50%, #56698a 50%, #8094ad); border-right: 1px solid #3c4a5e; }
.wb svg { width: 11px; height: 9px; }
.wb.close { width: 43px; background: linear-gradient(#e0a598, #c65a48 50%, #a92c1c 50%, #cf5d44); border-right: 0; padding-right: 1px; }

.chrome { height: 660px; position: relative; display: flex; flex-direction: column; background: linear-gradient(90deg, #9ebaf2, #b0c8f6 60%, #c5d9f9); }
.edge { position: absolute; right: 0; top: 0; width: 4px; height: 643px; background: rgba(185,255,190,.72); }
.menu { height: 23px; display: flex; align-items: center; padding: 0 0 2px 4px; white-space: nowrap; font-size: 11.500px; letter-spacing: -.42px; }
.menu span { flex: none; }
.menu .grip { margin-right: 8px; }
.m1 { width: 49.500px; } .m2 { width: 33.500px; } .m3 { width: 91px; } .m4 { width: 39px; } .m5 { width: 48px; } .m6 { width: 62px; } .m7 { width: 47px; } .m8 { width: 47px; } .m9 { width: 43px; } .m10 { width: 96px; } .m11 { width: 56px; }
.mdi { margin-left: auto; margin-right: -2px; }
.grip { flex: none; width: 5px; height: 15px; background: radial-gradient(circle at 50% 50%, #28417e 0 1px, transparent 1.300px) 0 0 / 5px 4px; }
.g2 { margin-right: 1.500px; }

.row { height: 24px; display: flex; gap: 5px; padding: 1px 0 1px 4px; }
.r2 { height: 24px; gap: 3px; }
.tb { flex: none; height: 22px; display: flex; align-items: center; border-radius: 3px; background: linear-gradient(#dfeafd, #c3d8fb 45%, #a9c6f5 75%, #8fb2ec); border-bottom: 1px solid #5c80c2; overflow: hidden; }
.w245 { width: 246px; } .w323 { width: 323px; } .w99 { width: 99px; } .w105 { width: 105px; } .w256 { width: 256px; } .w458 { width: 458px; } .w303 { width: 303px; } .w221 { width: 222px; } .w302 { width: 302px; }
.i { flex: none; width: 20.600px; height: 20px; display: grid; place-items: center; }
.i svg { width: 16px; height: 16px; }
.on { background: linear-gradient(#fdd9a8, #f9b66c); border: 1px solid #3b3566; }
.s { flex: none; width: 6px; height: 15px; background: linear-gradient(90deg, transparent 2px, #84a5dc 2px 3px, #f0f6ff 3px 4px, transparent 4px); }
.d { flex: none; width: 10.400px; height: 6px; display: block; background: linear-gradient(#7c8cab, #7c8cab) 50% 1px / 5px 1px no-repeat, linear-gradient(#7c8cab, #7c8cab) 50% 2px / 3px 1px no-repeat, linear-gradient(#7c8cab, #7c8cab) 50% 3px / 1px 1px no-repeat; }
.dk { background-image: linear-gradient(#111, #111), linear-gradient(#111, #111), linear-gradient(#111, #111); }
.chev { flex: none; margin-left: auto; width: 9.500px; height: 22px; background: linear-gradient(#111, #111) 50% 14px / 6px 1px no-repeat, linear-gradient(#fff, #fff) 60% 15px / 6px 1px no-repeat, linear-gradient(#111, #111) 50% 17px / 5px 2px no-repeat, linear-gradient(#fff, #fff) 65% 18px / 3px 1px no-repeat, linear-gradient(#86aaec, #4a78cc 60%, #1d3f94); }
.dim { color: #8492ae; }
.blue { color: #6f86b4; }
.combo { flex: none; height: 20px; display: flex; align-items: center; justify-content: space-between; background: linear-gradient(#fff, #fff) 0 0 / calc(100% - 12px) 100% no-repeat; padding: 0 0 2px 2px; border: 1px solid #dce8fb; font-size: 11.500px; letter-spacing: -.4px; }
.combo .d { position: relative; top: 1px; }
.c1 { width: 68px; margin-right: 1px; } .c2 { width: 67px; } .c3 { width: 66px; margin-left: 1px; } .c4 { width: 39px; background: #e8ebf2; color: #8b93a4; border-color: #b0c2e2; }

.main { height: 525px; display: flex; padding-top: 2px; }
.left { width: 235px; display: flex; flex-direction: column; background: #efeeee; }
.phead { height: 21px; flex: none; display: flex; align-items: center; padding: 0 7px 2px 3px; background: linear-gradient(#dfeafc, #b9d0f6 60%, #8bafe9); font-size: 11.500px; letter-spacing: -.5px; }
.phead span { flex: 1; margin-left: 5px; }
.pi { width: 9px; height: 9px; margin-left: 6px; }
.ptools { height: 33px; flex: none; display: flex; align-items: center; gap: 11px; padding-left: 12px; }
.ptools b { width: 18px; height: 18px; border: 1px solid #9a9a9a; border-radius: 2px; background: #e4e4e4; display: grid; place-items: center; }
.ptools svg { width: 15px; height: 15px; }
.tree { height: 183px; flex: none; background: #fff; border-top: 1px solid #888; border-left: 1px solid #888; position: relative; font-family: "Liberation Sans", sans-serif; font-size: 11px; color: #333; letter-spacing: -.35px; }
.wires { position: absolute; left: -1px; top: -1px; }
.n { height: 15px; display: flex; align-items: center; padding-left: 7px; position: relative; }
.n.first { margin-top: -1px; }
.n svg { width: 15px; height: 14px; margin-left: 5px; }
.n.c { padding-left: 33px; }
.n span { margin-left: 5px; }
.n .sel { background: #ececec; padding: 0 4px; margin: 0 0 0 1px; }
.pm { flex: none; width: 8px; height: 8px; border: 1px solid #999; background: #fff; display: grid; place-items: center; font: 8px/6px "Liberation Sans", sans-serif; color: #222; }
.tabs { height: 27px; flex: none; display: flex; gap: 1px; padding-left: 2px; background: linear-gradient(90deg, #c3d6f8, #f0f4fc); border-top: 1px solid #888; font-size: 11.500px; letter-spacing: -.3px; align-items: flex-start; }
.tabs span { height: 19px; display: flex; align-items: center; padding: 0 0 1px 3px; border: 1px solid #5876b4; border-top: 0; background: linear-gradient(#dce8fc, #a9c6f5); }
.tabs svg { width: 14px; height: 14px; margin-right: 3px; }
.tabs .act { background: linear-gradient(#fcd49c, #fbb871); }
.t1 { width: 61px; } .t2 { width: 61px; } .t3 { width: 59px; }
.props { flex: 1; padding: 11px 5px 0; }
.swl { height: 35px; font: 11px/13px "Liberation Sans", sans-serif; letter-spacing: -.2px; color: #333; }
.pbox { height: 188px; width: 225px; display: flex; border: 1px solid #8fa9d4; }
.plist { width: 208px; height: 186px; overflow: hidden; background: #a8c5ef; font: 10.500px "Liberation Sans", sans-serif; letter-spacing: -.15px; color: #333; }
.cat { height: 16px; display: flex; align-items: center; gap: 6px; padding-left: 2px; font-size: 11px; font-weight: bold; color: #14233f; letter-spacing: -.25px; border-bottom: 1px solid #bdd3f4; }
.pr { height: 18.700px; margin-left: 13px; display: flex; background: #fff; border-bottom: 1px solid #a8c5ef; }
.pr span { padding-left: 3px; line-height: 18px; width: 95px; overflow: hidden; white-space: nowrap; }
.pr span:first-child { width: 100px; border-right: 1px solid #a8c5ef; }
.pr .v0 { padding: 1px; }
.g { color: #8a8a8a; }
.btn { display: block; height: 15px; border: 1px solid #666; border-radius: 2px; background: linear-gradient(#f8f8f8, #d8d8d8); text-align: center; font: 8.500px/13px "DejaVu Sans", sans-serif; letter-spacing: -.3px; }
.sb { flex: 1; display: flex; flex-direction: column; align-items: center; background: #eee; }
.up, .dn { height: 16px; width: 7px; background: linear-gradient(#555, #555) 50% 7px / 3px 1px no-repeat, linear-gradient(#555, #555) 50% 8px / 5px 1px no-repeat; }
.dn { background-position: 50% 8px, 50% 7px; }
.thumb { width: 13px; height: 128px; border: 1px solid #999; border-radius: 2px; background: repeating-linear-gradient(#666 0 1px, transparent 1px 3px) 50% 50% / 6px 8px no-repeat, linear-gradient(90deg, #f5f5f5, #c9c9c9); }
.sb .sp { flex: 1; }

.editor { margin-left: 4px; width: 952px; display: flex; flex-direction: column; }
.etabs { height: 20px; flex: none; display: flex; align-items: flex-end; padding-left: 2px; padding-bottom: 1px; background: linear-gradient(#c8daf8, #f2f6fd); font-size: 11.500px; letter-spacing: -.4px; }
.et { height: 18px; width: 62px; display: flex; align-items: center; border: 1px solid #6d85b5; border-bottom: 0; border-radius: 0 3px 0 0; background: linear-gradient(#dbe7fb, #9dbdf1); gap: 3px; padding: 0 0 2px 3px; }
.et span { width: 22px; }
.et svg { width: 15px; height: 14px; }
.et .pi { width: 9px; height: 9px; margin-left: 1px; }
.et.a { width: 59px; padding-left: 1px; background: linear-gradient(#fde3bf, #fcc07c); border-left: 0; }
.nav { margin-left: auto; margin-bottom: 6px; }
.desk { width: 952px; height: 503px; border: 2px solid #8d8d90; border-right-color: #dcdcdc; border-bottom-color: #e8e4dc; outline: 0; }
.num { font: 15px Roboto, sans-serif; fill: #000; }
.mtxt { font: 300 31px Roboto, sans-serif; fill: #111; }

.right { flex: 1; display: flex; align-items: flex-start; padding-left: 3px; overflow: hidden; }
.libtab { width: 18px; height: 62px; border: 1px solid #c8914d; background: linear-gradient(90deg, #fde0b8, #fbbd78); display: flex; flex-direction: column; align-items: center; padding-top: 3px; margin-right: 1px; flex: none; }
.libtab svg { width: 14px; height: 14px; }
.libtab span { writing-mode: vertical-rl; font-size: 11.500px; line-height: 16px; margin-top: 4px; letter-spacing: -.2px; }
.vtb { flex: none; width: 34px; background: linear-gradient(90deg, #dbe8fd, #b9d1f9 55%, #7da4e6); border-radius: 3px; display: flex; flex-direction: column; align-items: center; overflow: hidden; }
.va { height: 373px; margin-right: 1px; }
.vb { height: 232px; }
.hgrip { width: 27px; height: 8px; flex: none; background: radial-gradient(circle at 50% 50%, #28417e 0 1px, transparent 1.300px) 0 1px / 4px 5px repeat-x; }
.vtb b { height: 20.600px; flex: none; display: flex; align-items: center; justify-content: center; }
.vtb b svg { width: 15px; height: 15px; }
.vb b, .va .w { width: 30px; justify-content: flex-start; }
.va .w { padding-left: 2px; }
.vb b { padding-left: 1px; }
.vb b .d { width: 12px; margin-left: 2px; }
.vb .in { padding-left: 6px; }
.hs { width: 25px; height: 5.500px; flex: none; background: linear-gradient(transparent 2px, #84a5dc 2px 3px, #f4f8ff 3px 4px, transparent 4px); }
.vend { margin-top: auto; width: 100%; height: 10px; background: linear-gradient(#6f96df, #2c55ae); display: flex; align-items: center; justify-content: flex-end; padding-right: 2px; }
.vend svg { width: 9px; height: 7px; }

.foot { height: 46px; display: flex; flex-direction: column; }
.dbrow { height: 22px; padding: 3px 0 0 3px; }
.dbt { width: 91px; height: 18px; display: flex; align-items: center; gap: 3px; padding: 0 0 2px 3px; border: 1px solid #6e7a9a; border-bottom: 0; border-radius: 0 3px 0 0; background: linear-gradient(#fde0b8, #fbb870); font-size: 11.500px; letter-spacing: -.6px; white-space: nowrap; }
.dbt svg { width: 14px; height: 14px; }
.r3 { gap: 3px; height: 24px; }
.r3 .tb { height: 23px; }
.pos { padding-bottom: 1px; }
.lb { flex: none; font-size: 11.500px; letter-spacing: -.3px; }
.lx { width: 11px; margin-left: 2px; } .ly { width: 12px; margin-left: 3px; } .lw { width: 35px; margin-left: 2px; } .lh { width: 39px; margin-left: 3px; }
.pos .sp { flex: none; width: 43px; height: 18px; padding-left: 2px; display: flex; justify-content: space-between; align-items: center; font-size: 11.500px; letter-spacing: -.4px; background: linear-gradient(90deg, #fff 28px, #dbe8fc 28px); }
.pos .sp i { width: 15px; height: 13px; background: linear-gradient(#111, #111) 50% 2px / 1px 1px no-repeat, linear-gradient(#111, #111) 50% 3px / 3px 1px no-repeat, linear-gradient(#111, #111) 50% 9px / 3px 1px no-repeat, linear-gradient(#111, #111) 50% 10px / 1px 1px no-repeat; }
.status { height: 18px; background: #f0ecec; display: flex; align-items: center; padding-left: 2px; font-size: 11px; letter-spacing: -.2px; color: #222; white-space: nowrap; }
.status span { flex: none; }
.st0 { width: 787px; } .st1 { width: 104px; } .st2 { width: 60px; } .st3 { width: 65px; } .sti { margin-right: 4px; } .st4 { width: 70px; } .st5 { width: 84px; }
```
